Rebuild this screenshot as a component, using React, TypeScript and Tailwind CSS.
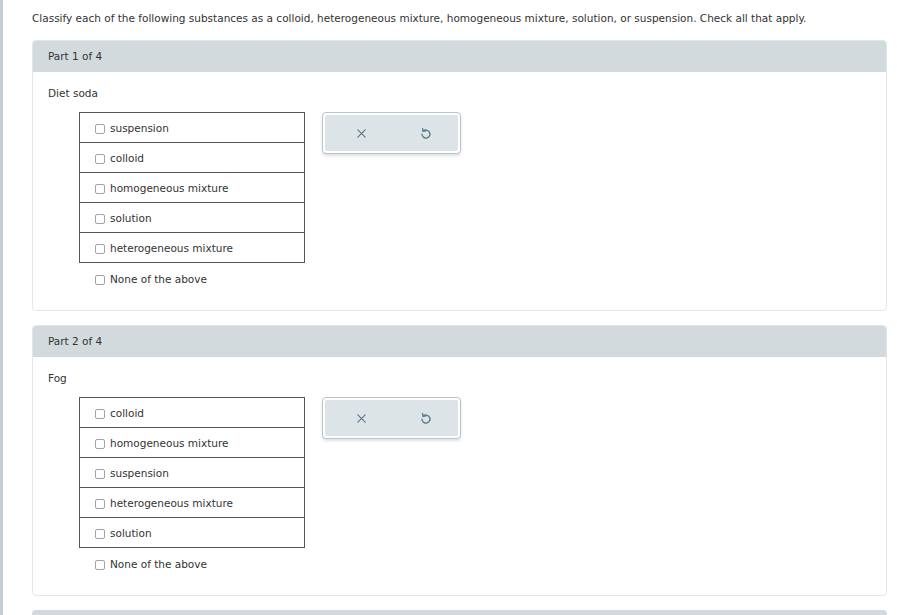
const parts = [
  {
    title: "Part 1 of 4",
    substance: "Diet soda",
    options: ["suspension", "colloid", "homogeneous mixture", "solution", "heterogeneous mixture"],
  },
  {
    title: "Part 2 of 4",
    substance: "Fog",
    options: ["colloid", "homogeneous mixture", "suspension", "heterogeneous mixture", "solution"],
  },
];

function Box() {
  return <span className="inline-block w-[10px] h-[10px] border border-[#a3a3a3] rounded-[2px] bg-white mr-[5px] shrink-0" />;
}

function Part({ title, substance, options }: { title: string; substance: string; options: string[] }) {
  return (
    <div className="rounded-[4px] border border-[#e1e7e9] bg-white mb-[14px] overflow-hidden">
      <div className="h-[31px] bg-[#d3dadd] flex items-center px-[15px]">{title}</div>
      <div className="px-[15px] pt-[15px] pb-[14px]">
        <div className="h-[14px] flex items-center">{substance}</div>
        <div className="flex items-start mt-[11px] ml-[31px]">
          <div>
            <div className="w-[226px] border border-[#555] border-b-0">
              {options.map((o) => (
                <div key={o} className="h-[30px] border-b border-[#555] flex items-center pl-[15px] pt-[3px]">
                  <Box />
                  {o}
                </div>
              ))}
            </div>
            <div className="h-[33px] flex items-center pl-[16px]">
              <Box />
              None of the above
            </div>
          </div>
          <div className="ml-[17px] w-[139px] h-[42px] rounded-[4px] border-[1.5px] border-[#b7c4ca] bg-white p-[2px] shadow-[0_2px_3px_rgba(0,0,0,0.12)]">
            <div className="h-full bg-[#dde4e7] rounded-[2px] flex items-center pl-[31px]">
              <svg width="11" height="11" viewBox="0 0 12 12" fill="none" stroke="#5d7b88" strokeWidth="1.3" strokeLinecap="round">
                <path d="M2 2L10 10M10 2L2 10" />
              </svg>
              <svg className="ml-[53px]" width="12" height="13" viewBox="0 0 12 13" fill="none" stroke="#5d7b88" strokeWidth="1.4" strokeLinecap="round" strokeLinejoin="round">
                <path d="M3.2 4.2A4 4 0 1 1 2 7.3" />
                <path d="M2.6 1.6L3.2 4.4L6 3.9" />
              </svg>
            </div>
          </div>
        </div>
      </div>
    </div>
  );
}

export default function App() {
  return (
    <div className="h-screen overflow-hidden bg-white flex text-[10.5px] text-[#333]" style={{ fontFamily: '"DejaVu Sans", Verdana, sans-serif' }}>
      <div className="w-[3px] bg-[#c5d0d6] shrink-0" />
      <div className="flex-1 pl-[29px] pr-[10px] pt-[12px]">
        <p className="h-[14px] flex items-center mb-[14px]">
          Classify each of the following substances as a colloid, heterogeneous mixture, homogeneous mixture, solution, or suspension. Check all that apply.
        </p>
        {parts.map((p) => (
          <Part key={p.title} {...p} />
        ))}
        {/* next part, only its top edge shows */}
        <div className="h-[31px] rounded-t-[4px] bg-[#d3dadd]" />
      </div>
    </div>
  );
}
